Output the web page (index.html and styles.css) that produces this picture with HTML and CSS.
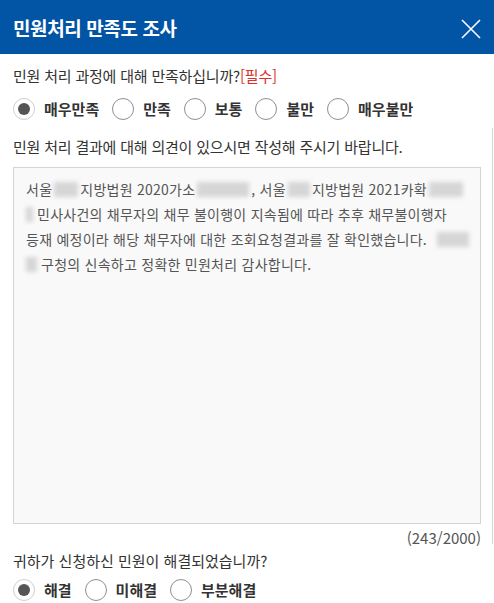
FILE: index.html
```html
<!DOCTYPE html>
<html lang="ko">
<head>
<meta charset="utf-8">
<link rel="stylesheet" href="styles.css">
</head>
<body>
<div class="dialog">
  <header class="header">
    <h1 class="title">민원처리 만족도 조사</h1>
    <button class="close" aria-label="닫기">
      <svg width="20" height="20" viewBox="0 0 20 20"><path d="M1 1 L19 19 M19 1 L1 19" stroke="#fff" stroke-width="1.6" fill="none"/></svg>
    </button>
  </header>
  <main class="content">
    <p class="question q1">민원 처리 과정에 대해 만족하십니까?<span class="req">[필수]</span></p>
    <div class="radios r1">
      <label class="opt"><span class="radio checked"></span>매우만족</label>
      <label class="opt"><span class="radio"></span>만족</label>
      <label class="opt"><span class="radio"></span>보통</label>
      <label class="opt"><span class="radio"></span>불만</label>
      <label class="opt"><span class="radio"></span>매우불만</label>
    </div>
    <p class="question q2">민원 처리 결과에 대해 의견이 있으시면 작성해 주시기 바랍니다.</p>
    <div class="textbox">
      <div class="line">서울<span class="blur w24"></span>지방법원 2020가소<span class="blur w52"></span>, 서울<span class="blur w22"></span>지방법원 2021카확<span class="blur w34"></span></div>
      <div class="line"><span class="blur w8 lead"></span>민사사건의 채무자의 채무 불이행이 지속됨에 따라 추후 채무불이행자</div>
      <div class="line">등재 예정이라 해당 채무자에 대한 조회요청결과를 잘 확인했습니다.<span class="blur w30 tail"></span></div>
      <div class="line"><span class="blur w12 lead"></span>구청의 신속하고 정확한 민원처리 감사합니다.</div>
    </div>
    <div class="counter">(243/2000)</div>
    <p class="question q3">귀하가 신청하신 민원이 해결되었습니까?</p>
    <div class="radios r3">
      <label class="opt"><span class="radio checked"></span>해결</label>
      <label class="opt"><span class="radio"></span>미해결</label>
      <label class="opt"><span class="radio"></span>부분해결</label>
    </div>
  </main>
  <div class="scrollline"></div>
</div>
</body>
</html>
```
FILE: styles.css
```css
* { box-sizing: border-box; }
html, body { margin: 0; padding: 0; background: #fff; }
body {
  font-family: "Noto Sans CJK KR", "Noto Sans", sans-serif;
  color: #333;
  width: 494px;
  height: 603px;
  overflow: hidden;
}
.dialog { position: relative; height: 603px; }
.header {
  height: 54px;
  background: #0254a5;
  display: flex;
  align-items: center;
  justify-content: space-between;
  padding: 0 13px 0 13px;
}
.title {
  margin: 0;
  color: #fff;
  font-size: 19px;
  font-weight: 700;
  letter-spacing: -0.4px;
  line-height: 24px;
  padding-top: 1px;
}
.close {
  background: none;
  border: 0;
  padding: 0;
  width: 20px;
  height: 20px;
  margin-top: 3px;
  display: flex;
}
.content { padding: 0 13px; }
.question {
  margin: 0;
  font-size: 15px;
  line-height: 20px;
  color: #333;
  letter-spacing: -0.2px;
}
.q1 { padding-top: 12px; }
.req { color: #d7322d; }
.radios {
  display: flex;
  align-items: center;
  gap: 13px;
}
.r1 { margin-top: 10px; height: 26px; }
.opt {
  display: flex;
  align-items: center;
  gap: 9px;
  font-size: 15px;
  font-weight: 700;
  color: #333;
  line-height: 20px;
}
.radio {
  width: 22px;
  height: 22px;
  border-radius: 50%;
  border: 1px solid #8f8f8f;
  background: #fff;
  display: flex;
  align-items: center;
  justify-content: center;
}
.radio.checked { border-color: #cfcfcf; }
.radio.checked::after {
  content: "";
  width: 12px;
  height: 12px;
  border-radius: 50%;
  background: #555;
}
.q2 { margin-top: 15px; }
.textbox {
  margin-top: 10px;
  height: 357px;
  border: 1px solid #d4d4d4;
  background: #f9f9f9;
  padding: 9px 12px;
  font-size: 14px;
  line-height: 25px;
  letter-spacing: 0.25px;
  color: #555;
}
.line { white-space: nowrap; }
.blur {
  display: inline-block;
  height: 15px;
  vertical-align: -2px;
  background: #d6d6d6;
  filter: blur(2px);
  margin: 0 2px;
}
.blur.lead { margin-left: 0; margin-right: 4px; }
.blur.tail { margin-left: 10px; }
.w8 { width: 7px; }
.w12 { width: 11px; }
.w22 { width: 22px; }
.w24 { width: 24px; }
.w30 { width: 32px; }
.w34 { width: 34px; }
.w52 { width: 52px; }
.counter {
  text-align: right;
  font-size: 15px;
  line-height: 22px;
  color: #555;
  margin-top: 3px;
}
.q3 { margin-top: 2px; letter-spacing: 0; }
.r3 { margin-top: 6px; height: 26px; }
.scrollline {
  position: absolute;
  right: 1px;
  top: 128px;
  width: 1px;
  height: 416px;
  background: #d8d8d8;
}
```
